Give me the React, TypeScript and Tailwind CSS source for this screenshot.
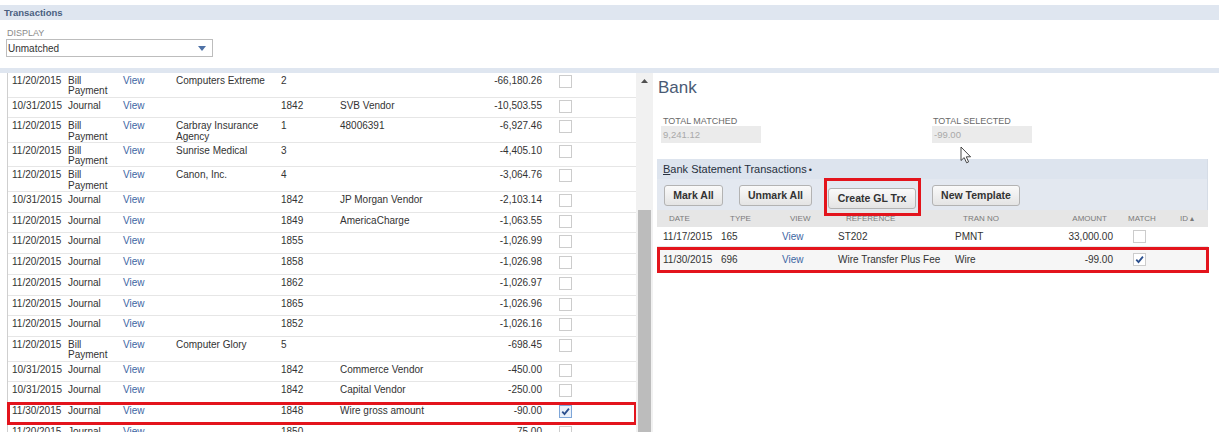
import React from "react"

type LeftRow = {
  date: string
  type: string[]
  name?: string
  num: string
  memo?: string
  amt: string
  checked?: boolean
  boxed?: boolean
}

const leftRows: LeftRow[] = [
  { date: "11/20/2015", type: ["Bill", "Payment"], name: "Computers Extreme", num: "2", amt: "-66,180.26" },
  { date: "10/31/2015", type: ["Journal"], num: "1842", memo: "SVB Vendor", amt: "-10,503.55" },
  { date: "11/20/2015", type: ["Bill", "Payment"], name: "Carbray Insurance Agency", num: "1", memo: "48006391", amt: "-6,927.46" },
  { date: "11/20/2015", type: ["Bill", "Payment"], name: "Sunrise Medical", num: "3", amt: "-4,405.10" },
  { date: "11/20/2015", type: ["Bill", "Payment"], name: "Canon, Inc.", num: "4", amt: "-3,064.76" },
  { date: "10/31/2015", type: ["Journal"], num: "1842", memo: "JP Morgan Vendor", amt: "-2,103.14" },
  { date: "11/20/2015", type: ["Journal"], num: "1849", memo: "AmericaCharge", amt: "-1,063.55" },
  { date: "11/20/2015", type: ["Journal"], num: "1855", amt: "-1,026.99" },
  { date: "11/20/2015", type: ["Journal"], num: "1858", amt: "-1,026.98" },
  { date: "11/20/2015", type: ["Journal"], num: "1862", amt: "-1,026.97" },
  { date: "11/20/2015", type: ["Journal"], num: "1865", amt: "-1,026.96" },
  { date: "11/20/2015", type: ["Journal"], num: "1852", amt: "-1,026.16" },
  { date: "11/20/2015", type: ["Bill", "Payment"], name: "Computer Glory", num: "5", amt: "-698.45" },
  { date: "10/31/2015", type: ["Journal"], num: "1842", memo: "Commerce Vendor", amt: "-450.00" },
  { date: "10/31/2015", type: ["Journal"], num: "1842", memo: "Capital Vendor", amt: "-250.00" },
  { date: "11/30/2015", type: ["Journal"], num: "1848", memo: "Wire gross amount", amt: "-90.00", checked: true, boxed: true },
  { date: "11/20/2015", type: ["Journal"], num: "1850", amt: "-75.00" },
]

const bankRows = [
  { date: "11/17/2015", type: "165", ref: "ST202", tran: "PMNT", amt: "33,000.00", checked: false },
  { date: "11/30/2015", type: "696", ref: "Wire Transfer Plus Fee", tran: "Wire", amt: "-99.00", checked: true },
]

function Check({ checked, focus }: { checked?: boolean; focus?: boolean }) {
  return (
    <span
      className={
        focus
          ? "flex h-[13px] w-[13px] items-center justify-center border border-[#7ea6d8] bg-[#eaf1fa]"
          : "flex h-[13px] w-[13px] items-center justify-center border border-[#cccccc] bg-white"
      }
    >
      {checked && (
        <svg viewBox="0 0 10 10" className="h-[9px] w-[9px]">
          <path d="M1.4 5.2 L3.9 7.9 L8.8 1.8" fill="none" stroke="#2b4f8e" strokeWidth="2" />
        </svg>
      )}
    </span>
  )
}

function Btn({ label, width }: { label: string; width: string }) {
  return (
    <button
      className={`h-[21px] ${width} rounded-[3px] border border-[#b3b3b3] bg-gradient-to-b from-[#fafafa] to-[#e4e4e4] text-center text-[10.5px] font-bold leading-[19px] text-[#333]`}
    >
      {label}
    </button>
  )
}

export default function App() {
  return (
    <div className="relative h-[432px] w-[1219px] overflow-hidden bg-white font-['Liberation_Sans',Arial,sans-serif] text-[#333]">
      <div className="h-[5px]" />
      <div className="h-[15px] bg-[#dfe6f0] pl-[4px] text-[9.5px] font-bold leading-[15px] text-[#4a5f80]">Transactions</div>

      {/* display filter */}
      <div className="h-[48px] pt-[8px]">
        <div className="pl-[7px] text-[9px] leading-[10px] text-[#8a8a8a]">DISPLAY</div>
        <div className="ml-[6px] mt-[1px] flex h-[18px] w-[207px] items-center justify-between border border-[#bdbdbd] pl-[1px] pr-[6px]">
          <span className="text-[10px] text-[#333]">Unmatched</span>
          <svg viewBox="0 0 8 5" className="h-[5px] w-[8px]">
            <path d="M0 0 H8 L4 5 Z" fill="#4e71a6" />
          </svg>
        </div>
      </div>
      <div className="h-[5px] bg-[#dfe6f0]" />

      <div className="flex h-[359px]">
        {/* left list */}
        <div className="w-[636px] overflow-hidden">
          <div className="ml-[7px] h-full border-l border-[#cfcfcf]">
            {leftRows.map((r, i) => (
              <div
                key={i}
                className="relative grid min-h-[20.75px] grid-cols-[56px_55px_53px_105px_59px_129px_85px_48px_1fr] border-b border-[#e6e6e6] pt-[3px] text-[10px] leading-[10.25px]"
              >
                <div className="pl-[4px]">{r.date}</div>
                <div className="pl-[4px]">
                  {r.type.map((t) => (
                    <div key={t}>{t}</div>
                  ))}
                </div>
                <div className="pl-[4px] text-[#3d66a4]">View</div>
                <div className="pl-[4px] pr-[4px]">{r.name}</div>
                <div className="pl-[4px]">{r.num}</div>
                <div className="pl-[4px]">{r.memo}</div>
                <div className="pr-[8px] text-right">{r.amt}</div>
                <div className="-mt-[1px] pl-[9px]">
                  <Check checked={r.checked} focus={r.checked} />
                </div>
                <div />
                {r.boxed && <span className="pointer-events-none absolute -bottom-[2px] -left-[1px] -right-[1px] -top-[1px] border-[3px] border-[#e3141c]" />}
              </div>
            ))}
          </div>
        </div>

        {/* scrollbar */}
        <div className="relative flex w-[17px] flex-col bg-[#f1f1f1]">
          <div className="flex h-[137px] justify-center pt-[6px]">
            <svg viewBox="0 0 7 4" className="h-[4px] w-[7px]">
              <path d="M0 4 L3.5 0 L7 4 Z" fill="#505050" />
            </svg>
          </div>
          <div className="ml-[2px] w-[13px] flex-1 bg-[#bcbcbc]" />
        </div>

        {/* bank panel */}
        <div className="flex-1 pl-[4px]">
          <div className="pl-[1px] pt-[5px] text-[17px] leading-[20px] text-[#4a5a74]">Bank</div>

          <div className="mt-[18px] flex">
            <div className="w-[275px] pl-[4px]">
              <div className="pl-[2px] text-[9px] leading-[10px] text-[#6a6a6a]">TOTAL MATCHED</div>
              <div className="h-[17px] w-[100px] bg-[#ebebeb] pl-[2px] text-[9.5px] leading-[17px] text-[#a9a9a9]">9,241.12</div>
            </div>
            <div>
              <div className="pl-[1px] text-[9px] leading-[10px] text-[#6a6a6a]">TOTAL SELECTED</div>
              <div className="h-[17px] w-[100px] bg-[#ebebeb] pl-[2px] text-[9.5px] leading-[17px] text-[#a9a9a9]">-99.00</div>
            </div>
          </div>

          <div className="mt-[16px] w-[551px]">
            <div className="h-[20px] border-r border-[#d5dce6] bg-[#dde4ee] pl-[6px] text-[11px] leading-[20px] text-[#27303d]">
              <span className="underline">B</span>ank Statement Transactions<span className="ml-[2px] text-[9px]">•</span>
            </div>
            <div className="flex h-[31px] gap-[16px] border-r border-[#d5dce6] bg-[#e3e8f0] pl-[7px] pt-[6px]">
              <Btn label="Mark All" width="w-[59px]" />
              <Btn label="Unmark All" width="w-[73px]" />
              <div className="relative">
                <Btn label="Create GL Trx" width="w-[88px]" />
                <span className="pointer-events-none absolute -bottom-[6px] -left-[4px] -right-[5px] -top-[7px] border-[3px] border-[#e3141c]" />
              </div>
              <Btn label="New Template" width="w-[88px]" />
            </div>
            <div className="grid h-[17px] grid-cols-[58px_61px_56px_117px_101px_68px_52px_1fr] bg-[#e6e6e6] text-[8px] leading-[17px] text-[#7a7a7a]">
              <div className="pl-[12px]">DATE</div>
              <div className="pl-[15px]">TYPE</div>
              <div className="pl-[14px]">VIEW</div>
              <div className="pl-[14px]">REFERENCE</div>
              <div className="pl-[14px]">TRAN NO</div>
              <div className="pr-[11px] text-right">AMOUNT</div>
              <div className="pl-[10px]">MATCH</div>
              <div className="pl-[10px]">ID ▴</div>
            </div>
            {bankRows.map((r, i) => (
              <div
                key={i}
                className={
                  i === 1
                    ? "relative grid h-[24px] grid-cols-[58px_61px_56px_117px_101px_68px_52px_1fr] items-center bg-[#f6f6f6] text-[10px]"
                    : "relative grid h-[20px] grid-cols-[58px_61px_56px_117px_101px_68px_52px_1fr] items-center border-b border-[#e8e8e8] text-[10px]"
                }
              >
                <div className="pl-[6px]">{r.date}</div>
                <div className="pl-[6px]">{r.type}</div>
                <div className="pl-[6px] text-[#3d66a4]">View</div>
                <div className="pl-[6px]">{r.ref}</div>
                <div className="pl-[6px]">{r.tran}</div>
                <div className="pr-[5px] text-right">{r.amt}</div>
                <div className="pl-[15px]">
                  <Check checked={r.checked} />
                </div>
                <div />
                {i === 1 && <span className="pointer-events-none absolute -bottom-[2px] left-0 -right-[1px] top-0 border-[3px] border-[#e3141c]" />}
              </div>
            ))}
          </div>
        </div>
      </div>

      {/* mouse pointer */}
      <svg viewBox="0 0 12 18" className="absolute left-[960px] top-[146px] h-[18px] w-[12px]">
        <path d="M1 1 L1 14.5 L4.2 11.6 L6.6 16.8 L8.6 15.9 L6.3 10.8 L10.6 10.8 Z" fill="#fff" stroke="#333" strokeWidth="0.9" strokeLinejoin="round" />
      </svg>
    </div>
  )
}
